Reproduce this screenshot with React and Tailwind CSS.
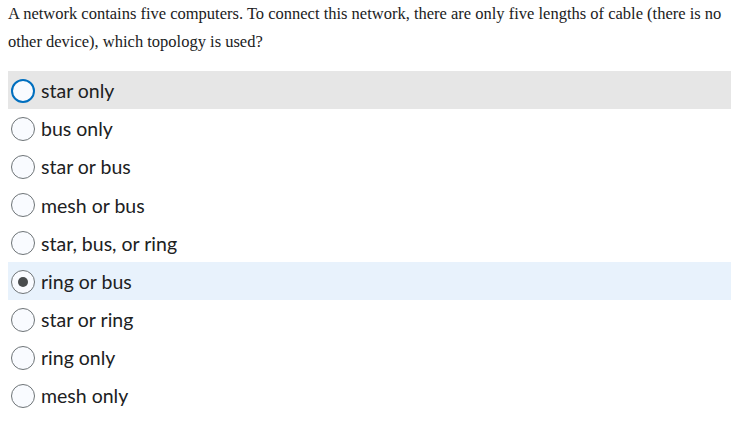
import React from "react";

const options = [
  { label: "star only", state: "focus" },
  { label: "bus only" },
  { label: "star or bus" },
  { label: "mesh or bus" },
  { label: "star, bus, or ring" },
  { label: "ring or bus", state: "checked" },
  { label: "star or ring" },
  { label: "ring only" },
  { label: "mesh only" },
];

function Radio({ state }) {
  if (state === "focus") {
    return (
      <span className="w-6 h-6 rounded-full border-2 border-[#006fbf] bg-[#f9fbff] shrink-0" />
    );
  }
  if (state === "checked") {
    return (
      <span className="w-6 h-6 rounded-full border border-[#6e7477] bg-[#f9fbff] shrink-0 flex items-center justify-center">
        <span className="w-[10px] h-[10px] rounded-full bg-[#494c4e]" />
      </span>
    );
  }
  return (
    <span className="w-6 h-6 rounded-full border border-[#6e7477] bg-[#f9fbff] shrink-0" />
  );
}

export default function App() {
  return (
    <div className="bg-white w-[740px] h-[424px] pl-2 pr-[9px]">
      <p className="text-[16.5px] leading-[28px] text-[#202122] font-['Liberation_Serif',serif]">
        A network contains five computers. To connect this network, there are only five lengths of cable (there is no other device), which topology is used?
      </p>
      <div className="mt-[15px] flex flex-col font-['Lato',sans-serif]">
        {options.map((o, i) => (
          <div
            key={i}
            className={
              "h-[38.2px] flex items-center gap-[6px] pl-[3px] pt-[1px] text-[19.5px] text-[#202122] " +
              (o.state === "focus"
                ? "bg-[#e6e6e6]"
                : o.state === "checked"
                ? "bg-[#e8f2fc]"
                : "")
            }
          >
            <Radio state={o.state} />
            <span>{o.label}</span>
          </div>
        ))}
      </div>
    </div>
  );
}
